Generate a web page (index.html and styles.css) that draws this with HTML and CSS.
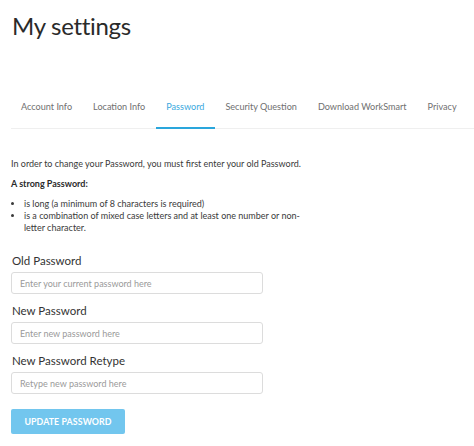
FILE: index.html
```html
<!DOCTYPE html>
<html lang="en">
<head>
<meta charset="utf-8">
<title>My settings</title>
<link rel="stylesheet" href="styles.css">
</head>
<body>
<div class="page">
  <h1 class="title">My settings</h1>
  <nav class="tabs">
    <a class="tab">Account Info</a>
    <a class="tab">Location Info</a>
    <a class="tab active">Password</a>
    <a class="tab">Security Question</a>
    <a class="tab">Download WorkSmart</a>
    <a class="tab">Privacy</a>
  </nav>
  <div class="content">
    <p class="intro">In order to change your Password, you must first enter your old Password.</p>
    <p class="strong">A strong Password:</p>
    <ul class="rules">
      <li>is long (a minimum of 8 characters is required)</li>
      <li>is a combination of mixed case letters and at least one number or non-letter character.</li>
    </ul>
    <form class="form">
      <label class="label">Old Password</label>
      <input class="input" type="password" placeholder="Enter your current password here">
      <label class="label">New Password</label>
      <input class="input" type="password" placeholder="Enter new password here">
      <label class="label">New Password Retype</label>
      <input class="input" type="password" placeholder="Retype new password here">
      <button class="button" type="button">UPDATE PASSWORD</button>
    </form>
  </div>
</div>
</body>
</html>
```
FILE: styles.css
```css
* { box-sizing: border-box; }
html, body { margin: 0; padding: 0; background: #fff; }
body { font-family: Lato, "Open Sans", sans-serif; color: #333; }
.page { padding-left: 11px; }
.title {
  margin: 11px 0 0 1px;
  font-size: 24px;
  line-height: 30px;
  letter-spacing: -0.3px;
  font-weight: 400;
  color: #2a2a2a;
}
.tabs {
  display: flex;
  margin-top: 47px;
  border-bottom: 1px solid #efefef;
  white-space: nowrap;
}
.tab {
  padding: 12px 10.5px 13px;
  font-size: 9.1px;
  line-height: 14px;
  color: #707070;
  border-bottom: 2px solid transparent;
  margin-bottom: -1px;
}
.tab:first-child { padding-left: 10px; }
.tab.active {
  color: #3aa9de;
  border-bottom-color: #2aa6dc;
}
.content {
  width: 300px;
  font-size: 9px;
  line-height: 12px;
  color: #3a3a3a;
}
.intro { margin: 29px 0 0; }
.strong { margin: 8px 0 0; font-weight: 700; color: #2a2a2a; }
.rules { margin: 8px 0 0; padding-left: 13px; }
.form { display: flex; flex-direction: column; align-items: flex-start; margin-top: 19.5px; }
.label {
  font-size: 11.5px;
  line-height: 14px;
  color: #333;
  margin-left: 1px;
}
.input {
  width: 252px;
  height: 22px;
  margin: 4.5px 0 9.5px;
  padding: 0 8px;
  border: 1px solid #dcdcdc;
  border-radius: 3px;
  font-family: inherit;
  font-size: 9px;
  color: #333;
  outline: none;
}
.input::placeholder { color: #9a9a9a; }
.button {
  margin-top: 5px;
  width: 114px;
  height: 25px;
  border: none;
  border-radius: 2px;
  background: #72c6ee;
  color: #fff;
  font-family: inherit;
  font-weight: 700;
  font-size: 8.8px;
  letter-spacing: 0.1px;
}
```
